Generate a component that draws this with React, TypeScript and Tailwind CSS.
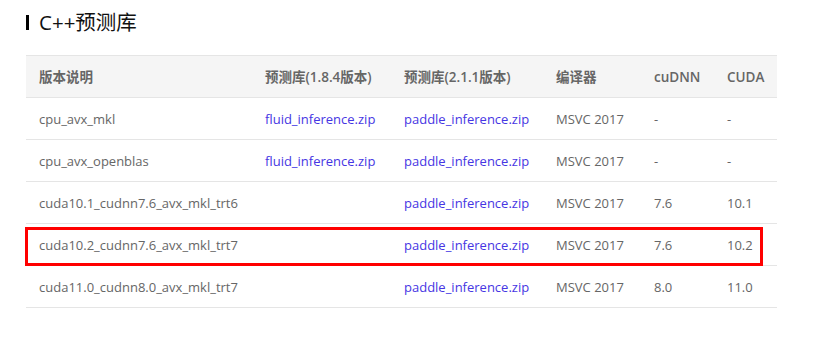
import React from "react";

const font = { fontFamily: '"Open Sans", "Noto Sans CJK SC", sans-serif' };

type Row = { name: string; v184?: string; v211: string; comp: string; cudnn: string; cuda: string };

const rows: Row[] = [
  { name: "cpu_avx_mkl", v184: "fluid_inference.zip", v211: "paddle_inference.zip", comp: "MSVC 2017", cudnn: "-", cuda: "-" },
  { name: "cpu_avx_openblas", v184: "fluid_inference.zip", v211: "paddle_inference.zip", comp: "MSVC 2017", cudnn: "-", cuda: "-" },
  { name: "cuda10.1_cudnn7.6_avx_mkl_trt6", v211: "paddle_inference.zip", comp: "MSVC 2017", cudnn: "7.6", cuda: "10.1" },
  { name: "cuda10.2_cudnn7.6_avx_mkl_trt7", v211: "paddle_inference.zip", comp: "MSVC 2017", cudnn: "7.6", cuda: "10.2" },
  { name: "cuda11.0_cudnn8.0_avx_mkl_trt7", v211: "paddle_inference.zip", comp: "MSVC 2017", cudnn: "8.0", cuda: "11.0" },
];

const grid = "grid grid-cols-[226px_139px_152px_98px_73px_63px] h-[42px] items-center border-b border-[#e5e5e5] pt-[2px]";

export default function App() {
  return (
    <div className="w-[830px] h-[344px] bg-white relative" style={font}>
      <div className="flex items-center pt-[10px] pl-[26px] h-[33px]">
        <div className="w-[3px] h-[15px] bg-black mr-[10px] mt-[2px]" />
        <span className="text-[20.5px] leading-[24px] text-[#111]">C++预测库</span>
      </div>
      <div className="ml-[26px] mt-[22px] w-[751px] border-t border-[#e5e5e5] text-[13px] text-[#666]">
        <div className={grid + " bg-[#f5f5f5] font-semibold text-[13.5px]"}>
          <div className="pl-[13px]">版本说明</div>
          <div className="pl-[13px]">预测库(1.8.4版本)</div>
          <div className="pl-[13px]">预测库(2.1.1版本)</div>
          <div className="pl-[13px]">编译器</div>
          <div className="pl-[13px]">cuDNN</div>
          <div className="pl-[13px]">CUDA</div>
        </div>
        {rows.map((r) => (
          <div key={r.name} className={grid}>
            <div className="pl-[13px]">{r.name}</div>
            <div className="pl-[13px] text-[#4636e3]">{r.v184 ?? ""}</div>
            <div className="pl-[13px] text-[#4636e3]">{r.v211}</div>
            <div className="pl-[13px]">{r.comp}</div>
            <div className="pl-[13px]">{r.cudnn}</div>
            <div className="pl-[13px]">{r.cuda}</div>
          </div>
        ))}
      </div>
      <div className="absolute left-[25px] top-[227px] w-[738px] h-[39px] border-[3px] border-[#ff0000] pointer-events-none" />
    </div>
  );
}
